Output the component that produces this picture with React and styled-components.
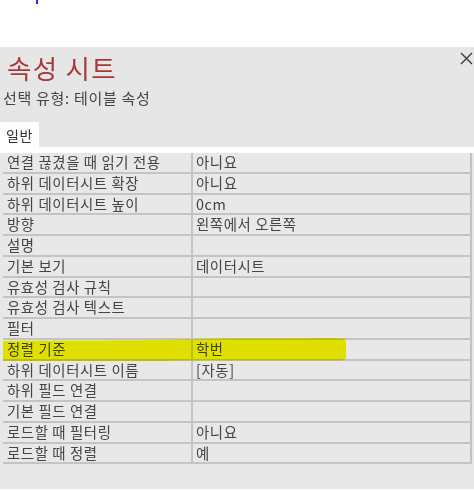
import React from "react";
import styled, { createGlobalStyle } from "styled-components";

const props = [
  ["연결 끊겼을 때 읽기 전용", "아니요"],
  ["하위 데이터시트 확장", "아니요"],
  ["하위 데이터시트 높이", "0cm"],
  ["방향", "왼쪽에서 오른쪽"],
  ["설명", ""],
  ["기본 보기", "데이터시트"],
  ["유효성 검사 규칙", ""],
  ["유효성 검사 텍스트", ""],
  ["필터", ""],
  ["정렬 기준", "학번", true],
  ["하위 데이터시트 이름", "[자동]"],
  ["하위 필드 연결", ""],
  ["기본 필드 연결", ""],
  ["로드할 때 필터링", "아니요"],
  ["로드할 때 정렬", "예"],
];

const App = () => {
  return (
    <>
      <GlobalStyle />
      <Top>
        <Cursor />
      </Top>
      <Panel>
        <Header>
          <div>
            <Title>속성 시트</Title>
            <Subtitle>선택 유형: 테이블 속성</Subtitle>
          </div>
          <Close width="13" height="13" viewBox="0 0 13 13">
            <path d="M1 1 L12 12 M12 1 L1 12" stroke="#3a3a3a" strokeWidth="1.4" />
          </Close>
        </Header>
        <Tabs>
          <Tab>일반</Tab>
        </Tabs>
        <Body>
          <Sheet>
            {props.map(([label, value, marked]) => (
              <Row key={label}>
                <Label>{label}</Label>
                <Value>{value}</Value>
                {marked && (
                  <Marker viewBox="0 0 344 25" width="344" height="25" preserveAspectRatio="none">
                    <path
                      d="M0 3 C40 2.4 90 2.6 140 2.2 C180 1.4 210 0.6 240 0.4 L338 0.2 C342 0.4 343 2 343 5 L343 19 C343 21.5 341 22.5 336 22.4 C300 22.6 260 22.2 230 22.6 C200 22.2 170 22.4 140 23.6 C100 24.6 50 24.4 0 24.2 Z"
                      fill="#f7f700"
                    />
                  </Marker>
                )}
              </Row>
            ))}
          </Sheet>
        </Body>
      </Panel>
    </>
  );
};

export default App;

const GlobalStyle = createGlobalStyle`
  html, body {
    margin: 0;
    padding: 0;
    background: #fff;
    overflow: hidden;
  }
  body {
    font-family: "Noto Sans CJK KR", "Noto Sans", sans-serif;
    width: 474px;
    height: 491px;
  }
`;

const Top = styled.div`
  height: 47px;
  display: flex;
  align-items: flex-start;
`;

const Cursor = styled.span`
  display: block;
  width: 2px;
  height: 4px;
  margin-left: 36px;
  background: #2b2bf0;
`;

const Panel = styled.div`
  background: #e6e6e6;
  width: 474px;
  height: 442px;
  overflow: hidden;
`;

const Header = styled.div`
  display: flex;
  justify-content: space-between;
  align-items: flex-start;
  padding: 5px 0 0 0;
`;

const Title = styled.h1`
  margin: 0 0 0 7px;
  font-size: 26.5px;
  line-height: 32px;
  font-weight: 400;
  color: #a8383c;
  letter-spacing: 1.3px;
`;

const Subtitle = styled.div`
  margin: 4px 0 0 3px;
  font-size: 15px;
  line-height: 20px;
  color: #444;
  letter-spacing: 0.7px;
`;

const Close = styled.svg`
  display: block;
  margin: 0 1px 0 0;
  flex: none;
`;

const Tabs = styled.div`
  display: flex;
  margin-top: 14px;
  height: 25px;
`;

const Tab = styled.div`
  background: #fff;
  width: 39px;
  padding-left: 6px;
  box-sizing: border-box;
  font-size: 14px;
  line-height: 27px;
  color: #333;
  letter-spacing: 0.5px;
`;

const Body = styled.div`
  border-top: 6px solid #fff;
  padding: 0 2px 24px 3px;
  background: #e7e7e7;
`;

const Sheet = styled.div`
  display: flex;
  flex-direction: column;
  border-right: 2px solid #c2c2c2;
`;

const Row = styled.div`
  position: relative;
  display: grid;
  grid-template-columns: 190px 1fr;
  height: 20.75px;
  box-sizing: border-box;
  border-bottom: 2px solid #c4c4c4;
  background: #e8e8e8;
  font-size: 14.4px;
  line-height: 18.75px;
  color: #444;
  white-space: nowrap;
  letter-spacing: 0.6px;
`;

const Label = styled.div`
  padding-left: 4px;
  border-right: 2px solid #c4c4c4;
`;

const Value = styled.div`
  padding-left: 3px;
`;

const Marker = styled.svg`
  position: absolute;
  left: 0;
  top: -2px;
  mix-blend-mode: multiply;
  pointer-events: none;
`;
